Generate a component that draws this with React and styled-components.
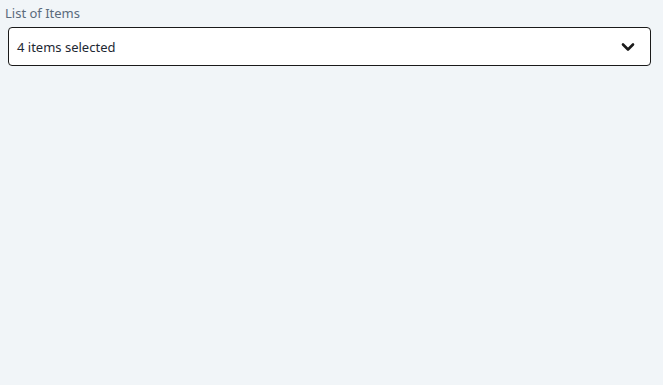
import React from 'react';
import styled, { createGlobalStyle } from 'styled-components';

const GlobalStyle = createGlobalStyle`
  html, body {
    margin: 0;
    padding: 0;
    background: #f1f5f8;
    font-family: "Noto Sans", "Open Sans", sans-serif;
  }
`;

const Field = styled.div`
  display: flex;
  flex-direction: column;
  padding: 4px 12px 0 5px;
`;

const Label = styled.label`
  font-size: 13px;
  line-height: 18px;
  color: #5b6b7c;
  margin-bottom: 5px;
`;

const Select = styled.button`
  display: flex;
  align-items: center;
  justify-content: space-between;
  margin-left: 3px;
  height: 39px;
  box-sizing: border-box;
  padding: 0 15px 0 8px;
  background: #fff;
  border: 1px solid #1a1a1a;
  border-radius: 4px;
  font-family: inherit;
  font-size: 13px;
  color: #1e2833;
  cursor: pointer;
  text-align: left;
`;

const Chevron = () => (
  <svg width="14" height="10" viewBox="0 0 14 10" fill="none">
    <path d="M2 2.5 L7 7.5 L12 2.5" stroke="#1a1a1a" strokeWidth="2.6" strokeLinecap="round" strokeLinejoin="round" />
  </svg>
);

export default function App() {
  return (
    <>
      <GlobalStyle />
      <Field>
        <Label>List of Items</Label>
        <Select>
          <span>4 items selected</span>
          <Chevron />
        </Select>
      </Field>
    </>
  );
}
